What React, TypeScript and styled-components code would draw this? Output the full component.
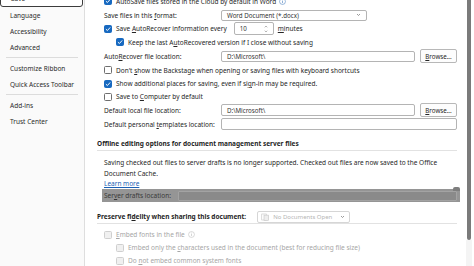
import React from "react";
import styled, { createGlobalStyle, css } from "styled-components";

const GlobalStyle = createGlobalStyle`
  html, body { margin: 0; padding: 0; background: #ffffff; overflow: hidden; }
  body { font-family: "Noto Sans", "Open Sans", sans-serif; color: #262626; }
  * { box-sizing: border-box; }
`;

const FS = "6.5px";

const Window = styled.div`
  display: flex;
  width: 474px;
  height: 266px;
  overflow: hidden;
  font-size: ${FS};
`;

const Nav = styled.nav`
  width: 85px;
  flex: none;
  background: #fafafa;
  border-right: 1px solid #dedede;
  display: flex;
  flex-direction: column;
  margin-top: -10px;
`;

const NavItem = styled.div<{ $selected?: boolean }>`
  height: 16px;
  display: flex;
  align-items: center;
  padding-left: 10px;
  white-space: nowrap;
  color: #2b2b2b;
  ${(p) =>
    p.$selected &&
    css`
      background: #ffffff;
      border: 1px solid #3c3c3c;
      border-radius: 3px;
      margin-right: 1px;
      height: 17px;
    `}
`;

const NavSep = styled.div`
  height: 1px;
  background: #dcdcdc;
  margin: 2px 6px 2px 6px;
`;

const Main = styled.main`
  flex: 1;
  position: relative;
  overflow: hidden;
  background: #ffffff;
`;

const Content = styled.div`
  display: flex;
  flex-direction: column;
  margin-top: -6px;
  padding: 0 17px 0 12px;
`;

const Row = styled.div<{ $h?: number; $indent?: number; $disabled?: boolean; $mt?: number }>`
  display: flex;
  align-items: center;
  height: ${(p) => p.$h ?? 14}px;
  margin-top: ${(p) => p.$mt ?? 0}px;
  padding-left: ${(p) => p.$indent ?? 7}px;
  white-space: pre;
  color: ${(p) => (p.$disabled ? "#a6a6a6" : "#262626")};
`;

const T = styled.span`
  white-space: pre;
`;

const Label = styled.span<{ $w?: number }>`
  width: ${(p) => p.$w ?? 117}px;
  flex: none;
  white-space: pre;
`;

const Key = styled.u`
  text-decoration-thickness: 0.5px;
  text-underline-offset: 1px;
`;

const Box = styled.span<{ $checked?: boolean; $disabled?: boolean }>`
  width: 8px;
  height: 8px;
  flex: none;
  border-radius: 1.5px;
  margin-right: 4px;
  display: inline-flex;
  align-items: center;
  justify-content: center;
  border: 1px solid ${(p) => (p.$disabled ? "#cfcfcf" : p.$checked ? "#1769c0" : "#6e6e6e")};
  background: ${(p) => (p.$disabled ? "#f0f0f0" : p.$checked ? "#1769c0" : "#ffffff")};
`;

const Check = ({ checked, disabled }: { checked?: boolean; disabled?: boolean }) => (
  <Box $checked={checked} $disabled={disabled}>
    {checked && (
      <svg width="6" height="6" viewBox="0 0 10 10">
        <path d="M1.5 5.2 L4 7.6 L8.6 2.4" fill="none" stroke="#fff" strokeWidth="1.6" />
      </svg>
    )}
  </Box>
);

const Field = styled.div<{ $w?: number; $h?: number; $ml?: number }>`
  height: ${(p) => p.$h ?? 12}px;
  width: ${(p) => (p.$w ? `${p.$w}px` : "auto")};
  flex: ${(p) => (p.$w ? "none" : "1")};
  margin-left: ${(p) => p.$ml ?? 0}px;
  border: 1px solid #b4b4b4;
  border-radius: 2px;
  background: #ffffff;
  display: flex;
  align-items: center;
  padding: 0 5px;
  font-size: 6.2px;
  color: #333;
  justify-content: space-between;
`;

const Chevron = () => (
  <svg width="5" height="4" viewBox="0 0 10 8">
    <path d="M2 2 L5 5 L8 2" fill="none" stroke="#666" strokeWidth="1.3" />
  </svg>
);

const SpinArrows = styled.div`
  display: flex;
  flex-direction: column;
  gap: 2px;
  align-items: center;
`;

const Button = styled.div`
  width: 37px;
  height: 14px;
  flex: none;
  margin-left: 5px;
  border: 1px solid #b8b8b8;
  border-radius: 2px;
  background: #fdfdfd;
  display: flex;
  align-items: center;
  justify-content: center;
  font-size: 6.2px;
`;

const Heading = styled.div<{ $mt?: number }>`
  display: flex;
  align-items: center;
  height: 14px;
  margin-top: ${(p) => p.$mt ?? 0}px;
  font-weight: 700;
  white-space: pre;
  border-bottom: 1px solid #e2e2e2;
  color: #1f1f1f;
`;

const Para = styled.p`
  margin: 6px 0 0 7px;
  line-height: 11px;
  width: 340px;
`;

const Link = styled.a`
  display: block;
  height: 10px;
  line-height: 10px;
  margin-left: 7px;
  color: #1a5fb4;
  text-decoration: underline;
  text-decoration-thickness: 0.5px;
`;

const DraftsBar = styled.div`
  position: relative;
  display: flex;
  align-items: center;
  height: 13px;
  margin: 0 -3px 0 5px;
  padding: 0 3px 0 2px;
  background: #959595;
  color: #3a3a3a;
  white-space: pre;
`;

const DraftsInput = styled.div`
  flex: 1;
  height: 10px;
  background: #8a8a8a;
  border: 1px solid #a3a3a3;
  border-radius: 1px;
`;

const Notch = styled.span`
  position: absolute;
  right: 0;
  top: -2px;
  width: 7px;
  height: 4px;
  background: #7e7e7e;
  border-radius: 2px 2px 0 0;
`;

const DisabledSelect = styled.div`
  width: 93px;
  height: 12px;
  margin-left: 11px;
  border: 1px solid #d6d6d6;
  border-radius: 2px;
  display: flex;
  align-items: center;
  gap: 3px;
  padding: 0 4px 0 3px;
  color: #b5b5b5;
  font-weight: 400;
  font-size: 6px;
`;

const Info = styled.span`
  display: inline-flex;
  margin-left: 3px;
`;

const InfoIcon = ({ color = "#6d6d6d" }: { color?: string }) => (
  <Info>
    <svg width="7" height="7" viewBox="0 0 10 10">
      <circle cx="5" cy="5" r="4.2" fill="none" stroke={color} strokeWidth="0.8" />
      <path d="M5 4.3 V7.3" stroke={color} strokeWidth="0.9" />
      <circle cx="5" cy="2.9" r="0.6" fill={color} />
    </svg>
  </Info>
);

const Scroll = styled.div`
  position: absolute;
  top: 0;
  right: 3px;
  width: 4px;
  height: 240px;
  background: #7a7a7a;
  border-radius: 0 0 2px 2px;
`;

const ScrollTrack = styled.div`
  position: absolute;
  top: 240px;
  right: 2px;
  width: 6px;
  bottom: 0;
  background: #f4f4f4;
`;

export default function App() {
  return (
    <>
      <GlobalStyle />
      <Window>
        <Nav>
          <NavItem $selected>Save</NavItem>
          <NavItem>Language</NavItem>
          <NavItem>Accessibility</NavItem>
          <NavItem>Advanced</NavItem>
          <NavSep />
          <NavItem>Customize Ribbon</NavItem>
          <NavItem>Quick Access Toolbar</NavItem>
          <NavSep />
          <NavItem>Add-ins</NavItem>
          <NavItem>Trust Center</NavItem>
        </Nav>
        <Main>
          <Content>
            <Row>
              <Check checked />
              <T>AutoSave files stored in the Cloud by default in Word</T>
              <InfoIcon color="#4a7fc0" />
            </Row>
            <Row>
              <Label>
                Save files in this <Key>f</Key>ormat:
              </Label>
              <Field $w={146} $h={11}>
                <T>Word Document (*.docx)</T>
                <Chevron />
              </Field>
            </Row>
            <Row $h={13}>
              <Check checked />
              <T>
                Save <Key>A</Key>utoRecover information every
              </T>
              <Field $w={40} $h={13} $ml={7}>
                <T>10</T>
                <SpinArrows>
                  <svg width="4" height="3" viewBox="0 0 10 6">
                    <path d="M2 5 L5 2 L8 5" fill="none" stroke="#666" strokeWidth="1.4" />
                  </svg>
                  <svg width="4" height="3" viewBox="0 0 10 6">
                    <path d="M2 1 L5 4 L8 1" fill="none" stroke="#666" strokeWidth="1.4" />
                  </svg>
                </SpinArrows>
              </Field>
              <T style={{ marginLeft: 4 }}>
                <Key>m</Key>inutes
              </T>
            </Row>
            <Row $indent={19}>
              <Check checked />
              <T>
                Keep the last A<Key>u</Key>toRecovered version if I close without saving
              </T>
            </Row>
            <Row>
              <Label>
                Auto<Key>R</Key>ecover file location:
              </Label>
              <Field $h={11}>
                <T>D:\Microsoft\</T>
              </Field>
              <Button>
                <T>
                  <Key>B</Key>rowse...
                </T>
              </Button>
            </Row>
            <Row>
              <Check />
              <T>
                Don't <Key>s</Key>how the Backstage when opening or saving files with keyboard shortcuts
              </T>
            </Row>
            <Row $h={13}>
              <Check checked />
              <T>
                Show additional places for saving, even if si<Key>g</Key>n-in may be required.
              </T>
            </Row>
            <Row $h={13}>
              <Check />
              <T>
                Save to <Key>C</Key>omputer by default
              </T>
            </Row>
            <Row>
              <Label>
                Default local f<Key>i</Key>le location:
              </Label>
              <Field $h={12}>
                <T>D:\Microsoft\</T>
              </Field>
              <Button>
                <T>
                  <Key>B</Key>rowse...
                </T>
              </Button>
            </Row>
            <Row>
              <Label>
                Default personal <Key>t</Key>emplates location:
              </Label>
              <Field $h={12} />
            </Row>
            <Heading $mt={6}>Offline editing options for document management server files</Heading>
            <Para>
              Saving checked out files to server drafts is no longer supported. Checked out files are now saved to the Office
              Document Cache.
            </Para>
            <Link>Learn more</Link>
            <DraftsBar>
              <Label $w={74}>
                Ser<Key>v</Key>er drafts location:
              </Label>
              <DraftsInput />
              <Notch />
            </DraftsBar>
            <Heading $mt={8}>
              <T>
                Preserve fi<Key>d</Key>elity when sharing this document:
              </T>
              <DisabledSelect>
                <svg width="9" height="8" viewBox="0 0 12 10">
                  <rect x="1" y="1" width="6" height="8" fill="none" stroke="#c4c4c4" strokeWidth="0.8" />
                  <rect x="4" y="2.5" width="6" height="7" fill="#eee" stroke="#c4c4c4" strokeWidth="0.8" />
                </svg>
                <T style={{ flex: 1 }}>No Documents Open</T>
                <Chevron />
              </DisabledSelect>
            </Heading>
            <Row $h={13} $disabled $mt={4}>
              <Check disabled />
              <T>
                <Key>E</Key>mbed fonts in the file
              </T>
              <InfoIcon color="#bdbdbd" />
            </Row>
            <Row $h={13} $indent={19} $disabled>
              <Check disabled />
              <T>
                Embed only the <Key>c</Key>haracters used in the document (best for reducing file size)
              </T>
            </Row>
            <Row $h={13} $indent={19} $disabled>
              <Check disabled />
              <T>
                Do <Key>n</Key>ot embed common system fonts
              </T>
            </Row>
          </Content>
          <Scroll />
          <ScrollTrack />
        </Main>
      </Window>
    </>
  );
}
